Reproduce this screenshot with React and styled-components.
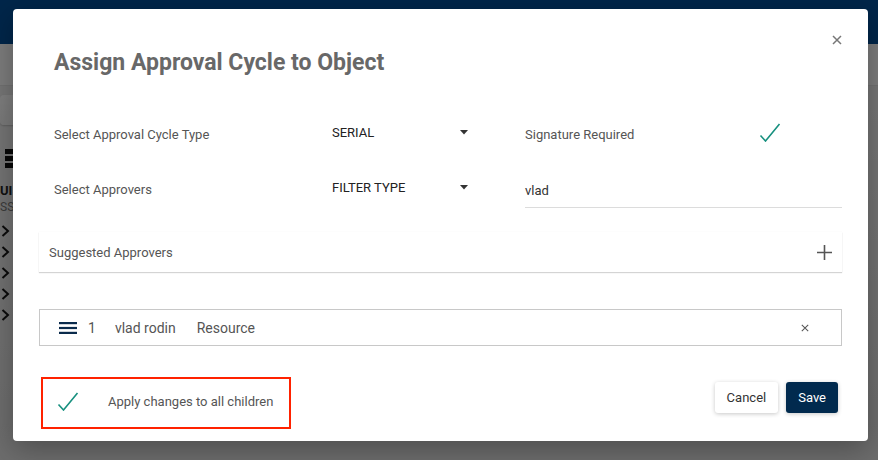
import styled, { createGlobalStyle } from "styled-components";

const GlobalStyle = createGlobalStyle`
  body {
    margin: 0;
    overflow: hidden;
    font-family: Roboto, "Liberation Sans", Arial, sans-serif;
  }
  * { box-sizing: border-box; }
`;

function Check() {
  return (
    <CheckSvg width="22" height="19" viewBox="0 0 22 19">
      <path d="M1.5 12.5 L6.5 18 L20.5 1" fill="none" stroke="currentColor" strokeWidth="1.6" />
    </CheckSvg>
  );
}

function Caret() {
  return (
    <svg width="8" height="5" viewBox="0 0 8 5">
      <path d="M0 0 L8 0 L4 4.5 Z" fill="#333" />
    </svg>
  );
}

function DragHandle() {
  return (
    <svg width="18" height="12" viewBox="0 0 18 12">
      <rect x="0" y="0" width="18" height="2.2" fill="#0b2b4c" />
      <rect x="0" y="4.9" width="18" height="2.2" fill="#0b2b4c" />
      <rect x="0" y="9.8" width="18" height="2.2" fill="#0b2b4c" />
    </svg>
  );
}

function Cross({ size = 10, color = "#777", width = 1.4 }) {
  return (
    <svg width={size} height={size} viewBox="0 0 10 10">
      <path d="M1 1 L9 9 M9 1 L1 9" stroke={color} strokeWidth={width} fill="none" />
    </svg>
  );
}

function Plus() {
  return (
    <svg width="15" height="15" viewBox="0 0 15 15">
      <path d="M7.5 0 V15 M0 7.5 H15" stroke="#555" strokeWidth="1.6" fill="none" />
    </svg>
  );
}

function ChevronIcon() {
  return (
    <svg width="9" height="12" viewBox="0 0 9 12">
      <path d="M1.5 1 L7 6 L1.5 11" stroke="#151515" strokeWidth="2" fill="none" />
    </svg>
  );
}

export default function App() {
  return (
    <>
      <GlobalStyle />
      <Page>
        <TopBar />
        <SubBar />
        <Content>
          <Sidebar>
            <ToolButton />
            <TreeIcon>
              <span />
              <span />
              <span />
            </TreeIcon>
            <TreeTitle>UI</TreeTitle>
            <TreeSub>SS</TreeSub>
            {[0, 1, 2, 3, 4].map((i) => (
              <Chevron key={i}>
                <ChevronIcon />
              </Chevron>
            ))}
          </Sidebar>
        </Content>
        <Backdrop />
        <Modal>
          <CloseButton>
            <Cross size={10} color="#777" width={1.5} />
          </CloseButton>
          <Title>Assign Approval Cycle to Object</Title>
          <Body>
            <Form>
              <Label>Select Approval Cycle Type</Label>
              <Select>
                <span>SERIAL</span>
                <Caret />
              </Select>
              <Label>Signature Required</Label>
              <CheckCell>
                <Check />
              </CheckCell>

              <Label>Select Approvers</Label>
              <Select>
                <span>FILTER TYPE</span>
                <Caret />
              </Select>
              <SearchInput>vlad</SearchInput>
            </Form>

            <Panel>
              <PanelTitle>Suggested Approvers</PanelTitle>
              <Plus />
            </Panel>

            <ApproverRow>
              <DragHandle />
              <Cell $gap={11}>1</Cell>
              <Cell $gap={19}>vlad rodin</Cell>
              <Cell $gap={21}>Resource</Cell>
              <RemoveButton>
                <Cross size={8} color="#555" width={1.3} />
              </RemoveButton>
            </ApproverRow>

            <Footer>
              <ApplyBox>
                <Check />
                <ApplyText>Apply changes to all children</ApplyText>
              </ApplyBox>
              <Actions>
                <Button>Cancel</Button>
                <Button $primary>Save</Button>
              </Actions>
            </Footer>
          </Body>
        </Modal>
      </Page>
    </>
  );
}

const Page = styled.div`
  position: relative;
  width: 878px;
  height: 460px;
  overflow: hidden;
  background: #eeeeee;
  display: flex;
  flex-direction: column;
`;

const TopBar = styled.div`
  height: 44px;
  background: #004c94;
`;

const SubBar = styled.div`
  height: 42px;
  background: #fafafa;
  border-bottom: 1px solid #e2e2e2;
`;

const Content = styled.div`
  flex: 1;
  background: linear-gradient(#ededed, #dadada);
`;

const Sidebar = styled.div`
  display: flex;
  flex-direction: column;
  padding-top: 9px;
`;

const ToolButton = styled.div`
  width: 120px;
  height: 30px;
  border-radius: 4px;
  background: linear-gradient(#ffffff, #f4f4f4);
  box-shadow: 0 1px 2px rgba(0, 0, 0, 0.2);
  margin-bottom: 24px;
`;

const TreeIcon = styled.div`
  display: flex;
  flex-direction: column;
  gap: 2px;
  padding-left: 5px;
  margin-bottom: 14px;
  span {
    display: block;
    width: 16px;
    height: 5px;
    background: #111;
  }
`;

const TreeTitle = styled.div`
  font-size: 13px;
  font-weight: 700;
  color: #222;
  line-height: 17px;
`;

const TreeSub = styled.div`
  font-size: 12px;
  color: #777;
  line-height: 17px;
  margin-bottom: 4px;
`;

const Chevron = styled.div`
  height: 21px;
  display: flex;
  align-items: center;
  padding-left: 1px;
`;

const Backdrop = styled.div`
  position: absolute;
  inset: 0;
  background: rgba(0, 0, 0, 0.5);
`;

const Modal = styled.div`
  position: absolute;
  left: 13px;
  top: 9px;
  width: 855px;
  height: 432px;
  background: #fff;
  border-radius: 4px;
  box-shadow: 0 8px 30px rgba(0, 0, 0, 0.3);
  display: flex;
  flex-direction: column;
`;

const CloseButton = styled.div`
  position: absolute;
  top: 26px;
  right: 26px;
  display: flex;
`;

const Title = styled.h2`
  margin: 41px 0 0 41px;
  font-size: 23px;
  font-weight: 700;
  line-height: 26px;
  color: #686868;
`;

const Body = styled.div`
  padding: 0 26px;
  display: flex;
  flex-direction: column;
`;

const Form = styled.div`
  display: grid;
  grid-template-columns: 278px 193px 233px 1fr;
  grid-auto-rows: 55px;
  align-items: center;
  padding-left: 15px;
  margin-top: 31px;
`;

const Label = styled.div`
  font-size: 13px;
  color: #555;
`;

const Select = styled.div`
  width: 136px;
  display: flex;
  align-items: center;
  justify-content: space-between;
  font-size: 13px;
  color: #222;
  padding-bottom: 4px;
`;

const CheckCell = styled.div`
  display: flex;
  padding-left: 1px;
  padding-bottom: 4px;
`;

const CheckSvg = styled.svg`
  color: #17907f;
  flex-shrink: 0;
`;

const SearchInput = styled.div`
  grid-column: 3 / 5;
  height: 34px;
  margin-top: 2px;
  display: flex;
  align-items: center;
  border-bottom: 1px solid #dcdcdc;
  font-size: 13px;
  color: #333;
`;

const Panel = styled.div`
  margin-top: 15px;
  height: 40px;
  display: flex;
  align-items: center;
  justify-content: space-between;
  padding: 0 10px;
  background: #fff;
  box-shadow: 0 1px 1px rgba(0, 0, 0, 0.16), 0 0 1px rgba(0, 0, 0, 0.06);
`;

const PanelTitle = styled.div`
  font-size: 13px;
  color: #555;
`;

const ApproverRow = styled.div`
  margin-top: 37px;
  height: 37px;
  border: 1px solid #c8c8c8;
  display: flex;
  align-items: center;
  padding: 0 32px 0 19px;
`;

const Cell = styled.span`
  margin-left: ${(p) => p.$gap}px;
  font-size: 14px;
  color: #555;
`;

const RemoveButton = styled.div`
  margin-left: auto;
  display: flex;
`;

const Footer = styled.div`
  margin-top: 31px;
  display: flex;
  align-items: center;
  justify-content: space-between;
  padding: 0 4px 0 2px;
`;

const ApplyBox = styled.div`
  width: 250px;
  height: 52px;
  border: 2px solid #ff2200;
  display: flex;
  align-items: center;
  padding: 0 0 3px 14px;
`;

const ApplyText = styled.span`
  margin-left: 29px;
  font-size: 13px;
  color: #555;
`;

const Actions = styled.div`
  display: flex;
  gap: 8px;
  margin-top: -12px;
`;

const Button = styled.button`
  height: 31px;
  padding: 0 12px;
  border: none;
  border-radius: 3px;
  font-family: Roboto, "Liberation Sans", Arial, sans-serif;
  font-size: 13px;
  background: ${(p) => (p.$primary ? "#012a4e" : "#fff")};
  color: ${(p) => (p.$primary ? "#fff" : "#333")};
  box-shadow: 0 1px 4px rgba(0, 0, 0, 0.22);
`;
